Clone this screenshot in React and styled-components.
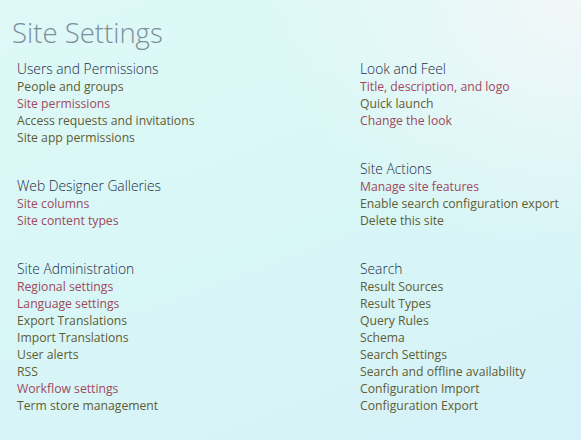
import React from "react";
import styled, { createGlobalStyle } from "styled-components";

const GlobalStyle = createGlobalStyle`
  html, body {
    margin: 0;
    padding: 0;
  }
  body {
    font-family: "Open Sans", "Noto Sans", sans-serif;
    background: #d9f6f6;
  }
`;

const columns = [
  [
    {
      title: "Users and Permissions",
      links: [
        ["People and groups", "olive"],
        ["Site permissions", "red"],
        ["Access requests and invitations", "olive"],
        ["Site app permissions", "olive"],
      ],
    },
    {
      title: "Web Designer Galleries",
      links: [
        ["Site columns", "red"],
        ["Site content types", "red"],
      ],
    },
    {
      title: "Site Administration",
      links: [
        ["Regional settings", "red"],
        ["Language settings", "red"],
        ["Export Translations", "olive"],
        ["Import Translations", "olive"],
        ["User alerts", "olive"],
        ["RSS", "olive"],
        ["Workflow settings", "red"],
        ["Term store management", "olive"],
      ],
    },
  ],
  [
    {
      title: "Look and Feel",
      links: [
        ["Title, description, and logo", "red"],
        ["Quick launch", "olive"],
        ["Change the look", "red"],
      ],
    },
    {
      title: "Site Actions",
      links: [
        ["Manage site features", "red"],
        ["Enable search configuration export", "olive"],
        ["Delete this site", "olive"],
      ],
    },
    {
      title: "Search",
      links: [
        ["Result Sources", "olive"],
        ["Result Types", "olive"],
        ["Query Rules", "olive"],
        ["Schema", "olive"],
        ["Search Settings", "olive"],
        ["Search and offline availability", "olive"],
        ["Configuration Import", "olive"],
        ["Configuration Export", "olive"],
      ],
    },
  ],
];

const App = () => {
  return (
    <Page>
      <GlobalStyle />
      <Title>Site Settings</Title>
      <Columns>
        {columns.map((sections, i) => (
          <Column key={i}>
            {sections.map((section) => (
              <Section key={section.title}>
                <Heading>{section.title}</Heading>
                {section.links.map(([label, tone]) => (
                  <Link key={label} href="#" $tone={tone}>
                    {label}
                  </Link>
                ))}
              </Section>
            ))}
          </Column>
        ))}
      </Columns>
    </Page>
  );
};

export default App;

const Page = styled.div`
  width: 581px;
  height: 440px;
  box-sizing: border-box;
  padding: 14px 0 0 12px;
  overflow: hidden;
  background:
    radial-gradient(ellipse 320px 260px at 100% 0%, #f2f7f9 0%, rgba(242, 247, 249, 0) 100%),
    linear-gradient(160deg, #def9f7 0%, #d8f7f6 45%, #d6f1f8 100%);
`;

const Title = styled.h1`
  margin: 0;
  font-size: 27.5px;
  font-weight: 300;
  line-height: 38px;
  color: #7d8e9b;
`;

const Columns = styled.div`
  display: grid;
  grid-template-columns: 343px 1fr;
  padding: 8px 0 0 5px;
`;

const Column = styled.div`
  display: flex;
  flex-direction: column;
  gap: 31px;
`;

const Section = styled.div`
  display: flex;
  flex-direction: column;
`;

const Heading = styled.h2`
  margin: 0 0 1px;
  font-size: 13.8px;
  font-weight: 300;
  line-height: 17px;
  color: #1c2c46;
`;

const Link = styled.a`
  font-size: 12.2px;
  line-height: 17px;
  text-decoration: none;
  color: ${(p) => (p.$tone === "red" ? "#a0485c" : "#615c32")};
`;
